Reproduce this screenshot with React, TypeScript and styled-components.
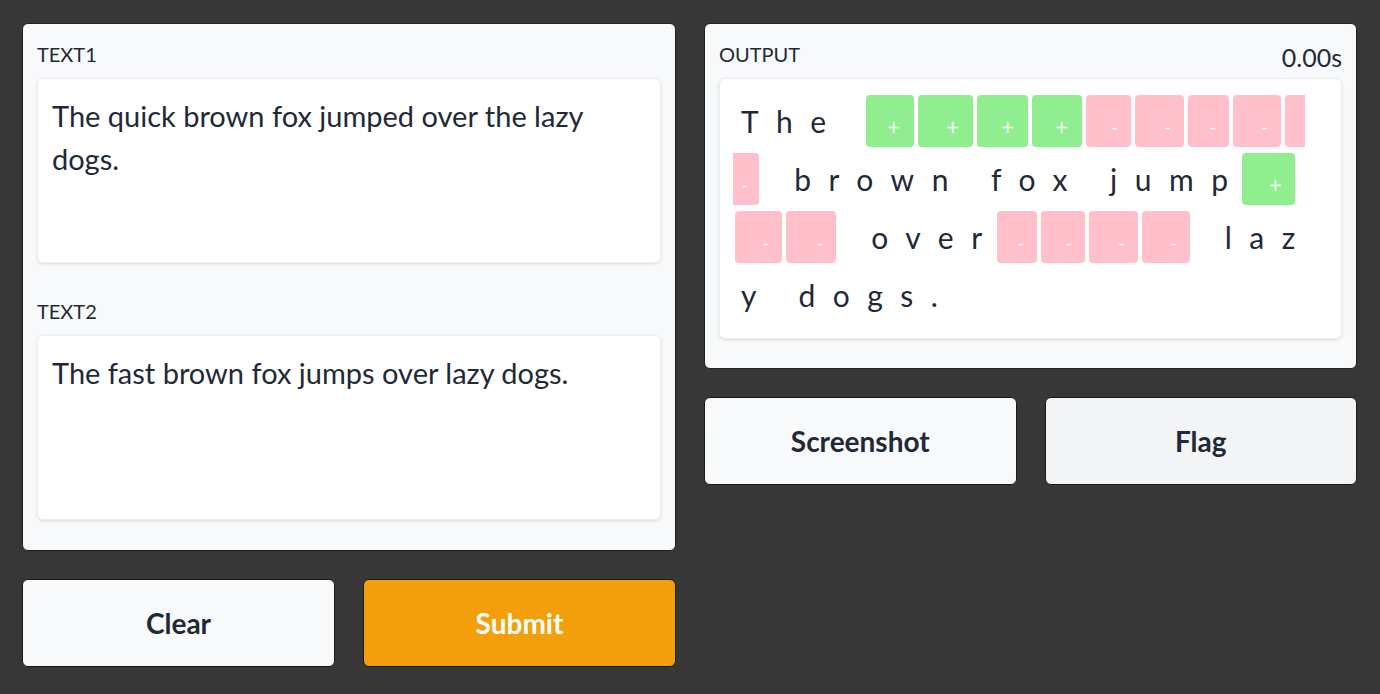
import React from "react";
import styled, { createGlobalStyle, css } from "styled-components";

const GlobalStyle = createGlobalStyle`
  html, body {
    margin: 0;
    padding: 0;
    background: #373737;
  }
  body {
    font-family: Lato, "Open Sans", "Noto Sans", sans-serif;
    color: #1f2937;
  }
  * { box-sizing: border-box; }
`;

const Page = styled.div`
  display: grid;
  grid-template-columns: 654px 653px;
  column-gap: 28px;
  align-items: start;
  padding: 23px 23px 0 22px;
  width: 1380px;
  height: 694px;
`;

const Column = styled.div`
  display: flex;
  flex-direction: column;
  gap: 28px;
`;

const Panel = styled.section<{ $bottom: number }>`
  background: #f8f9fa;
  border: 1px solid #202020;
  border-radius: 6px;
  padding: 16px 14px ${(p) => p.$bottom}px;
  display: flex;
  flex-direction: column;
  gap: 34px;
`;

const Field = styled.div`
  display: flex;
  flex-direction: column;
  gap: 10px;
`;

const Header = styled.div`
  display: flex;
  justify-content: space-between;
  align-items: flex-start;
  height: 28px;
`;

const FieldLabel = styled.div`
  font-size: 20px;
  line-height: 28px;
  height: 28px;
  color: #1f2937;
  text-transform: uppercase;
`;

const Timing = styled.div`
  font-size: 25px;
  line-height: 28px;
  margin-top: 3px;
  color: #1f2937;
`;

const TextBox = styled.textarea`
  display: block;
  width: 100%;
  height: 185px;
  resize: none;
  overflow: hidden;
  border: 1px solid #eceef1;
  border-radius: 6px;
  background: #ffffff;
  box-shadow: 0 1px 3px rgba(0, 0, 0, 0.12);
  padding: 15px 14px;
  font-family: Lato, "Open Sans", "Noto Sans", sans-serif;
  font-size: 29px;
  line-height: 43px;
  color: #1f2937;
  outline: none;
`;

const OutputBox = styled.div`
  background: #ffffff;
  border: 1px solid #eceef1;
  border-radius: 6px;
  box-shadow: 0 1px 3px rgba(0, 0, 0, 0.12);
  padding: 16px 13px 17px;
  display: flex;
  flex-direction: column;
  gap: 6px;
  height: 261px;
`;

const DiffRow = styled.div`
  display: flex;
  align-items: baseline;
  height: 52px;
  font-size: 30px;
  line-height: 52px;
  white-space: pre;
`;

const PlainText = styled.span`
  letter-spacing: 17.5px;
  padding-left: 8px;
  margin-right: -5px;
  color: #1f2937;
`;

const Mark = styled.span<{ $tone: "add" | "del"; $cut?: "left" | "right" }>`
  display: inline-flex;
  align-items: center;
  justify-content: flex-end;
  align-self: stretch;
  height: 52px;
  margin: 0 2px;
  padding: 12px 13px 0 0;
  border-radius: 4px;
  background: ${(p) => (p.$tone === "add" ? "#90ee90" : "#ffc0cb")};
  ${(p) =>
    p.$cut === "right" &&
    css`
      border-top-right-radius: 0;
      border-bottom-right-radius: 0;
      margin-right: 0;
      padding-right: 0;
    `}
  ${(p) =>
    p.$cut === "left" &&
    css`
      border-top-left-radius: 0;
      border-bottom-left-radius: 0;
      margin-left: 0;
      padding-right: 11px;
    `}
`;

const MarkLabel = styled.span`
  font-family: "DejaVu Sans", "Noto Sans", sans-serif;
  font-size: 17px;
  line-height: 20px;
  color: #ffffff;
`;

const ButtonRow = styled.div`
  display: grid;
  grid-template-columns: 1fr 1fr;
  gap: 28px;
`;

const ActionButton = styled.button<{ $variant: "plain" | "muted" | "primary" }>`
  height: 88px;
  border: 1px solid #1a1a1a;
  border-radius: 6px;
  font-family: Lato, "Open Sans", "Noto Sans", sans-serif;
  font-weight: 700;
  font-size: 28px;
  cursor: pointer;
  background: ${(p) =>
    p.$variant === "primary" ? "#f39f0b" : p.$variant === "muted" ? "#f3f4f6" : "#f8f9fa"};
  color: ${(p) => (p.$variant === "primary" ? "#ffffff" : "#1f2937")};
`;

type Seg =
  | { kind: "text"; text: string }
  | { kind: "add" | "del"; w: number; label?: boolean; cut?: "left" | "right" };

const rows: Seg[][] = [
  [
    { kind: "text", text: "The " },
    { kind: "add", w: 48 },
    { kind: "add", w: 55 },
    { kind: "add", w: 51 },
    { kind: "add", w: 50 },
    { kind: "del", w: 45 },
    { kind: "del", w: 49 },
    { kind: "del", w: 41 },
    { kind: "del", w: 48 },
    { kind: "del", w: 20, label: false, cut: "right" },
  ],
  [
    { kind: "del", w: 26, cut: "left" },
    { kind: "text", text: " brown fox jump" },
    { kind: "add", w: 53 },
  ],
  [
    { kind: "del", w: 47 },
    { kind: "del", w: 50 },
    { kind: "text", text: " over" },
    { kind: "del", w: 40 },
    { kind: "del", w: 44 },
    { kind: "del", w: 49 },
    { kind: "del", w: 48 },
    { kind: "text", text: " laz" },
  ],
  [{ kind: "text", text: "y dogs." }],
];

export default function App() {
  return (
    <>
      <GlobalStyle />
      <Page>
        <Column>
          <Panel $bottom={30}>
            <Field>
              <FieldLabel>Text1</FieldLabel>
              <TextBox readOnly value="The quick brown fox jumped over the lazy dogs." />
            </Field>
            <Field>
              <FieldLabel>Text2</FieldLabel>
              <TextBox readOnly value="The fast brown fox jumps over lazy dogs." />
            </Field>
          </Panel>
          <ButtonRow>
            <ActionButton $variant="plain">Clear</ActionButton>
            <ActionButton $variant="primary">Submit</ActionButton>
          </ButtonRow>
        </Column>
        <Column>
          <Panel $bottom={29}>
            <Field>
              <Header>
                <FieldLabel>Output</FieldLabel>
                <Timing>0.00s</Timing>
              </Header>
              <OutputBox>
                {rows.map((row, i) => (
                  <DiffRow key={i}>
                    {row.map((seg, j) =>
                      seg.kind === "text" ? (
                        <PlainText key={j}>{seg.text}</PlainText>
                      ) : (
                        <Mark key={j} $tone={seg.kind} $cut={seg.cut} style={{ width: seg.w }}>
                          {seg.label === false ? null : (
                            <MarkLabel>{seg.kind === "add" ? "+" : "-"}</MarkLabel>
                          )}
                        </Mark>
                      )
                    )}
                  </DiffRow>
                ))}
              </OutputBox>
            </Field>
          </Panel>
          <ButtonRow>
            <ActionButton $variant="plain">Screenshot</ActionButton>
            <ActionButton $variant="muted">Flag</ActionButton>
          </ButtonRow>
        </Column>
      </Page>
    </>
  );
}
